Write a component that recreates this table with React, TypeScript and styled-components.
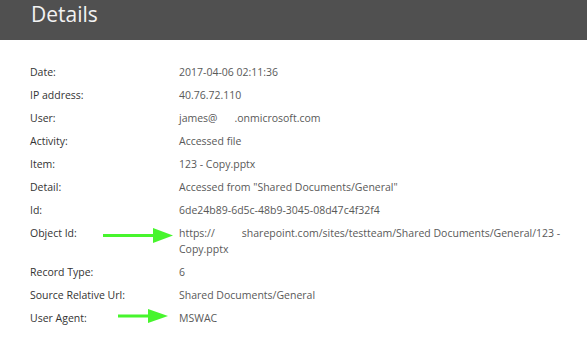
import React from "react";
import styled, { createGlobalStyle } from "styled-components";

const Global = createGlobalStyle`
  html, body { margin: 0; padding: 0; background: #ffffff; }
  body { font-family: "Open Sans", "Noto Sans", sans-serif; width: 587px; height: 344px; overflow: hidden; }
`;

const Page = styled.div`
  display: flex;
  flex-direction: column;
  width: 587px;
`;

const Header = styled.header`
  height: 40px;
  background: #505050;
  color: #f2f2f2;
  padding: 2px 0 0 31px;
  box-sizing: border-box;
  font-size: 21px;
  line-height: 24px;
  font-weight: 400;
`;

const List = styled.div`
  display: flex;
  flex-direction: column;
  gap: 7px;
  padding: 24px 0 0 30px;
`;

const Row = styled.div`
  position: relative;
  display: grid;
  grid-template-columns: 149px 1fr;
  font-size: 10.5px;
  line-height: 16px;
`;

const Label = styled.div`
  color: #333333;
  white-space: nowrap;
`;

const Value = styled.div`
  color: #595959;
  display: flex;
  flex-direction: column;
`;

const Line = styled.span`
  white-space: nowrap;
`;

const Redacted = styled.span<{ $w: number }>`
  display: inline-block;
  width: ${(p) => p.$w}px;
`;

const ArrowSvg = styled.svg<{ $left: number; $top: number }>`
  position: absolute;
  left: ${(p) => p.$left}px;
  top: ${(p) => p.$top}px;
  overflow: visible;
`;

const GREEN = "#47f52d";

const Arrow: React.FC<{ left: number; top: number; len: number; h: number }> = ({ left, top, len, h }) => {
  const head = 20;
  const mid = h / 2;
  return (
    <ArrowSvg $left={left} $top={top} width={len} height={h} viewBox={`0 0 ${len} ${h}`}>
      <rect x={0} y={mid - 1.5} width={len - head + 1} height={3} fill={GREEN} />
      <polygon points={`${len - head},0 ${len},${mid} ${len - head},${h}`} fill={GREEN} />
    </ArrowSvg>
  );
};

type Item = { label: string; value: React.ReactNode; arrow?: { left: number; top: number; len: number; h: number } };

const items: Item[] = [
  { label: "Date:", value: <Line>2017-04-06 02:11:36</Line> },
  { label: "IP address:", value: <Line>40.76.72.110</Line> },
  {
    label: "User:",
    value: (
      <Line>
        james@<Redacted $w={17} />.onmicrosoft.com
      </Line>
    ),
  },
  { label: "Activity:", value: <Line>Accessed file</Line> },
  { label: "Item:", value: <Line>123 - Copy.pptx</Line> },
  { label: "Detail:", value: <Line>Accessed from "Shared Documents/General"</Line> },
  { label: "Id:", value: <Line>6de24b89-6d5c-48b9-3045-08d47c4f32f4</Line> },
  {
    label: "Object Id:",
    value: (
      <>
        <Line>
          https://<Redacted $w={27} />sharepoint.com/sites/testteam/Shared Documents/General/123 -
        </Line>
        <Line>Copy.pptx</Line>
      </>
    ),
    arrow: { left: 73, top: 3, len: 70, h: 15 },
  },
  { label: "Record Type:", value: <Line>6</Line> },
  { label: "Source Relative Url:", value: <Line>Shared Documents/General</Line> },
  { label: "User Agent:", value: <Line>MSWAC</Line>, arrow: { left: 88, top: -1, len: 50, h: 14 } },
];

export default function App() {
  return (
    <Page>
      <Global />
      <Header>Details</Header>
      <List>
        {items.map((it) => (
          <Row key={it.label}>
            <Label>{it.label}</Label>
            <Value>{it.value}</Value>
            {it.arrow && <Arrow {...it.arrow} />}
          </Row>
        ))}
      </List>
    </Page>
  );
}
